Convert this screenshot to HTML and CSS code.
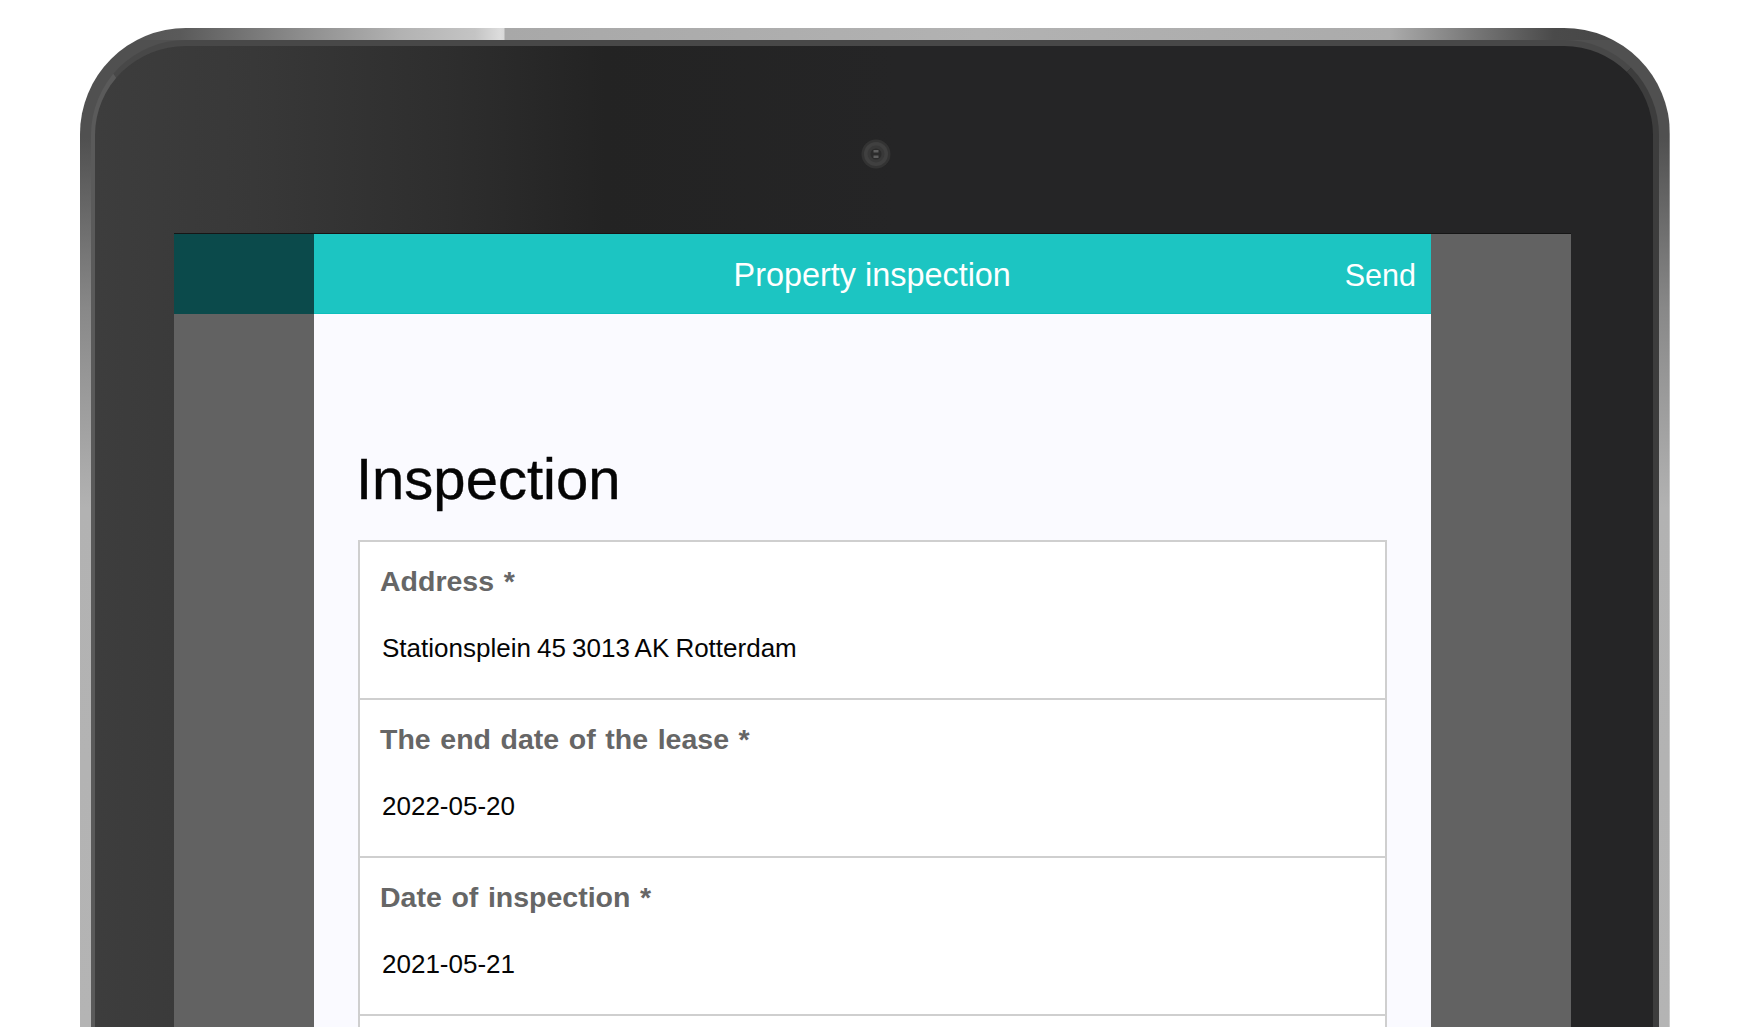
FILE: index.html
```html
<!DOCTYPE html>
<html lang="en">
<head>
<meta charset="utf-8">
<title>Property inspection</title>
<link rel="stylesheet" href="styles.css">
</head>
<body>
<div class="device">
  <div class="bezel">
    <svg class="camera" viewBox="0 0 30 30" width="30" height="30" aria-hidden="true">
      <circle cx="15" cy="15" r="14.5" fill="#333"/>
      <circle cx="15" cy="15" r="12" fill="#404040"/>
      <circle cx="15" cy="15" r="8.5" fill="#383838"/>
      <circle cx="15" cy="15" r="5.5" fill="#2b2b2b"/>
      <rect x="12.5" y="11" width="5" height="2.5" fill="#5e5e5e"/>
      <rect x="12.5" y="16.5" width="5" height="2.5" fill="#5e5e5e"/>
    </svg>
    <div class="screen">
      <aside class="side side-left"><div class="side-cap"></div></aside>
      <main class="panel">
        <header class="topbar">
          <span></span>
          <h2 class="topbar-title">Property inspection</h2>
          <a class="topbar-send">Send</a>
        </header>
        <div class="content">
          <h1 class="heading">Inspection</h1>
          <section class="card">
            <div class="row">
              <div class="label">Address *</div>
              <div class="value">Stationsplein 45 3013 AK Rotterdam</div>
            </div>
            <div class="row">
              <div class="label">The end date of the lease *</div>
              <div class="value">2022-05-20</div>
            </div>
            <div class="row">
              <div class="label">Date of inspection *</div>
              <div class="value">2021-05-21</div>
            </div>
            <div class="row"></div>
          </section>
        </div>
      </main>
      <aside class="side"></aside>
    </div>
  </div>
</div>
</body>
</html>
```
FILE: styles.css
```css
* { box-sizing: border-box; }
html, body { margin: 0; height: 1027px; overflow: hidden; background: #fff; }
body { padding: 27.5px 0 0 79.5px; font-family: "Liberation Sans", Arial, sans-serif; }

.device {
  width: 1590.5px;
  height: 999.5px;
  overflow: hidden;
  padding: 12px 11.5px 0 11.5px;
  border-radius: 106px 106px 0 0;
  background:
    linear-gradient(90deg, #505050 0, #5a5a5a 100px, #8c8c8c 220px, #b2b2b2 320px, #c4c4c4 395px, #dcdcdc 420px, #d8d8d8 424px, #a8a8a8 425px, #b2b2b2 900px, #ababab 1310px, #777 1394px, #4a4a4a 1474px, #444 1591px) top left / 100% 12px no-repeat,
    linear-gradient(90deg, transparent 0, transparent 1589.5px, rgba(255,255,255,.3) 1589.5px) 0 0 / 100% 100% no-repeat,
    linear-gradient(180deg, #505050 0, #505050 110px, #888 280px, #b2b2b2 480px, #b4b4b4 100%);
}

.bezel {
  height: 1100px;
  padding-top: 93px;
  padding-left: 78.5px;
  border-style: solid;
  border-color: #484848 #3d3d3d transparent #5a5a5a;
  border-width: 6px 6px 0 4px;
  border-radius: 95px 95px 0 0;
  background: linear-gradient(90deg, #3d3d3d 0, #383838 160px, #2e2e2e 350px, #232323 510px, #252526 800px, #252526 100%);
}

.camera { display: block; margin-left: 687.5px; filter: blur(.6px); }

.screen {
  display: grid;
  grid-template-columns: 140px 1117.5px 140px;
  width: 1397.5px;
  margin-top: 65.5px;
  height: 1000px;
  box-shadow: 0 -1px 0 #161616;
}

.side { background: #626262; }
.side-cap { height: 79.5px; background: #0b4a4b; }

.panel { background: #fafaff; }

.topbar {
  display: grid;
  grid-template-columns: 1fr auto 1fr;
  align-items: center;
  height: 79.5px;
  padding: 4px 15px 0;
  background: #1cc5c2;
  border-bottom: 1px solid #0ebfbc;
  color: #fff;
}
.topbar-title { margin: 0; font-size: 32.4px; font-weight: 400; line-height: 1; }
.topbar-send { justify-self: end; font-size: 30.5px; line-height: 1; }

.content { padding: 0 44.5px 0 44px; }

.heading {
  margin: 0 0 0 -1.5px;
  padding-top: 136px;
  height: 226.5px;
  font-size: 58px;
  font-weight: 400;
  line-height: 1;
  color: #050505;
  -webkit-text-stroke: .4px #050505;
}

.card {
  background: #fff;
  border: 2px solid #cfcfcf;
  border-bottom: 0;
}

.row {
  height: 158.1px;
  padding: 23px 0 0 20.5px;
  border-bottom: 2px solid #cfcfcf;
}

.label { font-size: 28.5px; font-weight: 700; line-height: 33px; color: #666; word-spacing: 1.7px; }
.value { margin: 35px 0 0 2px; font-size: 26px; line-height: 30px; color: #050505; word-spacing: -1.1px; }
```
